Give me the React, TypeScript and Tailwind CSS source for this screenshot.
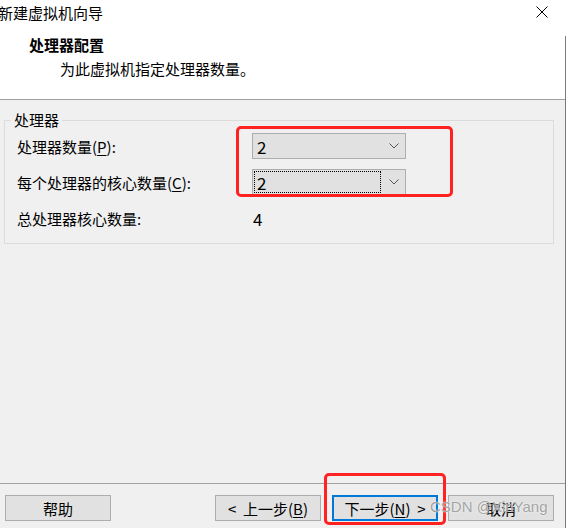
import React from "react";

function Chevron() {
    return (
        <svg width="10" height="6" viewBox="0 0 10 6" className="shrink-0">
            <path d="M0.5 0.5 L5 5 L9.5 0.5" fill="none" stroke="#555555" strokeWidth="1" />
        </svg>
    );
}

function Combo({ value, focused = false }: { value: string; focused?: boolean }) {
    return (
        <div className="flex items-center w-[154px] h-[26px] bg-[#e1e1e1] border border-[#adadad] pr-[6px]">
            <div
                className={
                    focused
                        ? "flex-1 h-[22px] ml-[1px] mr-[8px] flex items-center pl-[2px] border border-dotted border-black"
                        : "flex-1 h-[22px] ml-[1px] mr-[8px] flex items-center pl-[3px]"
                }
            >
                <span className="text-[17px] leading-none text-black">{value}</span>
            </div>
            <Chevron />
        </div>
    );
}

function Button({
    children,
    primary = false,
    className = "",
}: {
    children: React.ReactNode;
    primary?: boolean;
    className?: string;
}) {
    return (
        <button
            className={
                (primary
                    ? "border-2 border-[#0078d7] "
                    : "border border-[#adadad] ") +
                "w-[106px] h-[26px] bg-[#e1e1e1] flex items-center justify-center text-[15px] leading-none text-black whitespace-pre " +
                className
            }
        >
            {children}
        </button>
    );
}

export default function App() {
    return (
        <div className="relative w-[566px] h-[528px] overflow-hidden bg-[#f0f0f0] flex flex-col font-['Noto_Sans_CJK_SC','Noto_Sans',sans-serif] text-black">
            {/* title bar + header */}
            <div className="h-[24px] bg-white flex items-center justify-between shrink-0">
                <span className="-ml-[2px] text-[15px] leading-none">新建虚拟机向导</span>
                <svg width="12" height="12" viewBox="0 0 12 12" className="mr-[18px]">
                    <path d="M0.5 0.5 L11.5 11.5 M11.5 0.5 L0.5 11.5" stroke="#000" strokeWidth="1" />
                </svg>
            </div>
            <div className="h-[76px] bg-white border-b border-[#a0a0a0] shrink-0 pt-[11px]">
                <div className="pl-[29px] text-[15px] leading-[20px] font-bold">处理器配置</div>
                <div className="pl-[60px] mt-[4px] text-[15px] leading-[20px]">为此虚拟机指定处理器数量。</div>
            </div>

            {/* body */}
            <div className="flex-1 px-[4px] pt-[11px]">
                <fieldset className="w-[550px] border border-[#dcdcdc] px-0 pt-[4px] pb-[12px] m-0">
                    <legend className="ml-[6px] px-[3px] text-[15px] leading-[18px]">处理器</legend>
                    <div className="grid grid-cols-[235px_1fr] items-center gap-y-[10px] pl-[12px]">
                        <span className="text-[15px] leading-none">
                            处理器数量(<span className="underline underline-offset-2">P</span>):
                        </span>
                        <Combo value="2" />
                        <span className="text-[15px] leading-none">
                            每个处理器的核心数量(<span className="underline underline-offset-2">C</span>):
                        </span>
                        <Combo value="2" focused />
                        <span className="text-[15px] leading-none h-[26px] flex items-center">总处理器核心数量:</span>
                        <span className="text-[17px] leading-none pl-[1px]">4</span>
                    </div>
                </fieldset>
            </div>

            {/* footer */}
            <div className="h-[45px] border-t border-[#a0a0a0] shrink-0 flex items-start pt-[11px] pl-[5px]">
                <Button>帮助</Button>
                <Button className="ml-[104px] w-[105px]">
                    {"<  上一步("}<span className="underline underline-offset-2">B</span>)
                </Button>
                <Button primary className="ml-[11px]">
                    下一步(<span className="underline underline-offset-2">N</span>){"  >"}
                </Button>
                <Button className="ml-[10px]">取消</Button>
            </div>

            {/* window edge */}
            <div className="absolute right-0 top-[36px] bottom-0 w-[1px] bg-[#7a7a7a]" />

            {/* red annotation boxes */}
            <div className="absolute left-[236px] top-[126px] w-[217px] h-[71px] border-[3px] border-[#ff2222] rounded-[5px]" />
            <div className="absolute left-[324px] top-[473px] w-[122px] h-[52px] border-[3px] border-[#ff2222] rounded-[5px]" />

            {/* watermark */}
            <div className="absolute left-[430px] top-[499px] text-[15px] leading-none font-['Liberation_Sans',sans-serif] text-[#a3a3a3] [text-shadow:0_0_2px_#ffffff]">
                CSDN @XinYang
            </div>
        </div>
    );
}
